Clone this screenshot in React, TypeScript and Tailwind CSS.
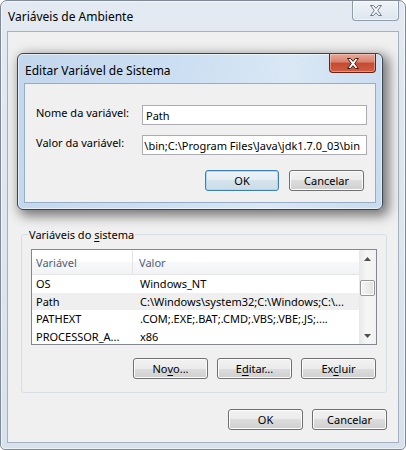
import React from "react";

const btn =
  "h-[21px] w-[75px] rounded-[3px] border border-[#707070] bg-[linear-gradient(#f2f2f2_0%,#ebebeb_50%,#dddddd_50%,#cfcfcf_100%)] shadow-[inset_0_0_0_1px_#fcfcfc] flex items-center justify-center text-black";

function CloseX({ fill, stroke }: { fill: string; stroke: string }) {
  return (
    <svg width="14" height="11" viewBox="0 0 14 11">
      <polygon
        points="1.5,0.5 4.6,0.5 7,3.3 9.4,0.5 12.5,0.5 8.7,5.5 12.5,10.5 9.4,10.5 7,7.7 4.6,10.5 1.5,10.5 5.3,5.5"
        fill={fill}
        stroke={stroke}
        strokeWidth="1"
        strokeLinejoin="round"
      />
    </svg>
  );
}

function Arrow({ up }: { up?: boolean }) {
  return (
    <svg width="7" height="4" viewBox="0 0 7 4">
      <polygon points={up ? "0,4 7,4 3.5,0" : "0,0 7,0 3.5,4"} fill="#4f4f4f" />
    </svg>
  );
}

const rows: { name: string; value: string; sel?: boolean }[] = [
  { name: "OS", value: "Windows_NT" },
  { name: "Path", value: "C:\\Windows\\system32;C:\\Windows;C:\\...", sel: true },
  { name: "PATHEXT", value: ".COM;.EXE;.BAT;.CMD;.VBS;.VBE;.JS;...." },
  { name: "PROCESSOR_A...", value: "x86" },
];

export default function App() {
  return (
    <div className="relative w-[406px] h-[450px] overflow-hidden bg-white font-['Noto_Sans',sans-serif] text-[11px] leading-[15px] text-black">
      {/* Outer window */}
      <div className="w-full h-full rounded-t-[7px] rounded-b-[5px] border border-[#7f8a96] bg-[linear-gradient(to_bottom,#e3eaf2,#d8e2ed)] shadow-[inset_0_0_0_1px_rgba(255,255,255,0.55)] flex flex-col px-[6px] pb-[6px]">
        <div className="h-[30px] flex items-start justify-between">
          <div className="pl-[1px] pt-[8px] text-[12px]">Variáveis de Ambiente</div>
          <div className="w-[47px] h-[20px] rounded-b-[4px] border border-t-0 border-[#8d9bac] bg-[linear-gradient(#f0f4f8,#dde5ee)] shadow-[inset_0_0_0_1px_rgba(255,255,255,0.6)] flex items-center justify-center">
            <CloseX fill="#f4f6f9" stroke="#6d7a8a" />
          </div>
        </div>
        <div className="flex-1 border border-[#a3b1c2] bg-[#f0f0f0] flex flex-col">
          <fieldset className="mt-[195px] ml-[13px] mr-[11px] border border-[#d5dfe5] rounded-[3px] px-[9px] pt-[7px] pb-[13px]">
            <legend className="-ml-[3px] px-[1px]">
              Variáveis do <span className="underline underline-offset-[2px]">s</span>istema
            </legend>
            <div className="h-[96px] border border-[#828790] bg-white flex">
              <div className="flex-1 flex flex-col overflow-hidden">
                <div className="h-[25px] shrink-0 flex bg-[linear-gradient(#ffffff_0%,#ffffff_50%,#f7f8f9_50%,#f2f3f5_100%)] border-b border-[#e5e5e5] text-[#4c607a]">
                  <div className="w-[101px] pl-[4px] flex items-center border-r border-[#e5e5e5]">Variável</div>
                  <div className="pl-[6px] flex items-center">Valor</div>
                </div>
                {rows.map((r) => (
                  <div
                    key={r.name}
                    className={
                      "h-[17.5px] shrink-0 flex items-center whitespace-nowrap " +
                      (r.sel ? "bg-[#efefef]" : "")
                    }
                  >
                    <div className="w-[101px] shrink-0 pl-[4px]">{r.name}</div>
                    <div className="pl-[7px]">{r.value}</div>
                  </div>
                ))}
              </div>
              <div className="w-[17px] flex flex-col bg-[linear-gradient(to_right,#e8e8e8,#f6f6f6_45%,#f1f1f1)]">
                <div className="h-[17px] flex items-center justify-center">
                  <Arrow up />
                </div>
                <div className="mt-[13px] mx-[1px] h-[16px] rounded-[2px] border border-[#969696] bg-[linear-gradient(to_right,#f6f6f6,#e2e2e2)] shadow-[inset_0_0_0_1px_#ffffff]" />
                <div className="flex-1" />
                <div className="h-[17px] flex items-center justify-center">
                  <Arrow />
                </div>
              </div>
            </div>
            <div className="mt-[13px] pr-[1px] flex justify-end gap-[9px]">
              <button type="button" className={btn}>
                No<span className="underline underline-offset-[2px]">v</span>o...
              </button>
              <button type="button" className={btn}>
                E<span className="underline underline-offset-[2px]">d</span>itar...
              </button>
              <button type="button" className={btn}>
                Ex<span className="underline underline-offset-[2px]">c</span>luir
              </button>
            </div>
          </fieldset>
          <div className="mt-[16px] mr-[11px] flex justify-end gap-[9px]">
            <button type="button" className={btn}>OK</button>
            <button type="button" className={btn}>Cancelar</button>
          </div>
        </div>
      </div>

      {/* Inner dialog (overlapping) */}
      <div className="absolute left-[17px] top-[53px] w-[366px] h-[157px] rounded-[6px] border border-[#3b4450] bg-[linear-gradient(100deg,#c3d7ed_0%,#cddff2_45%,#dae8f5_70%,#c8dbef_100%)] shadow-[inset_0_0_0_1px_rgba(255,255,255,0.55),4px_4px_12px_2px_rgba(0,0,0,0.5)] flex flex-col px-[6px] pb-[6px]">
        <div className="h-[29px] shrink-0 flex items-start justify-between">
          <div className="pl-[1px] pt-[9px] text-[12px]">Editar Variável de Sistema</div>
          <div className="w-[47px] h-[19px] rounded-b-[4px] border border-t-0 border-[#6b1e12] bg-[linear-gradient(#eaa99a_0%,#d9806c_45%,#c54a32_50%,#cf5d42_100%)] shadow-[inset_0_0_0_1px_rgba(255,220,210,0.45)] flex items-center justify-center">
            <CloseX fill="#ffffff" stroke="#4a1a10" />
          </div>
        </div>
        <div className="flex-1 border border-[#97adc5] bg-[#f0f0f0] pt-[21px] pl-[11px] flex flex-col">
          <div className="flex items-start h-[20px]">
            <div className="w-[106px]">Nome da variável:</div>
            <div className="w-[225px] h-[20px] border border-[#abadb3] bg-white pl-[3px] flex items-center">Path</div>
          </div>
          <div className="mt-[10px] flex items-start h-[20px]">
            <div className="w-[106px]">Valor da variável:</div>
            <div className="w-[225px] h-[20px] border border-[#abadb3] bg-white pr-[6px] flex items-center justify-end overflow-hidden whitespace-nowrap">
              <span>{"\\bin;C:\\Program Files\\Java\\jdk1.7.0_03\\bin"}</span>
            </div>
          </div>
          <div className="mt-[15px] pr-[11px] flex justify-end gap-[10px]">
            <button
              type="button"
              className="h-[21px] w-[74px] rounded-[3px] border border-[#3c7fb1] bg-[linear-gradient(#eef4f8_0%,#e4edf3_50%,#d5e3ed_50%,#cbdce8_100%)] shadow-[inset_0_0_0_1px_#a9dbf6] flex items-center justify-center text-black"
            >
              OK
            </button>
            <button type="button" className={btn}>Cancelar</button>
          </div>
        </div>
      </div>
    </div>
  );
}
